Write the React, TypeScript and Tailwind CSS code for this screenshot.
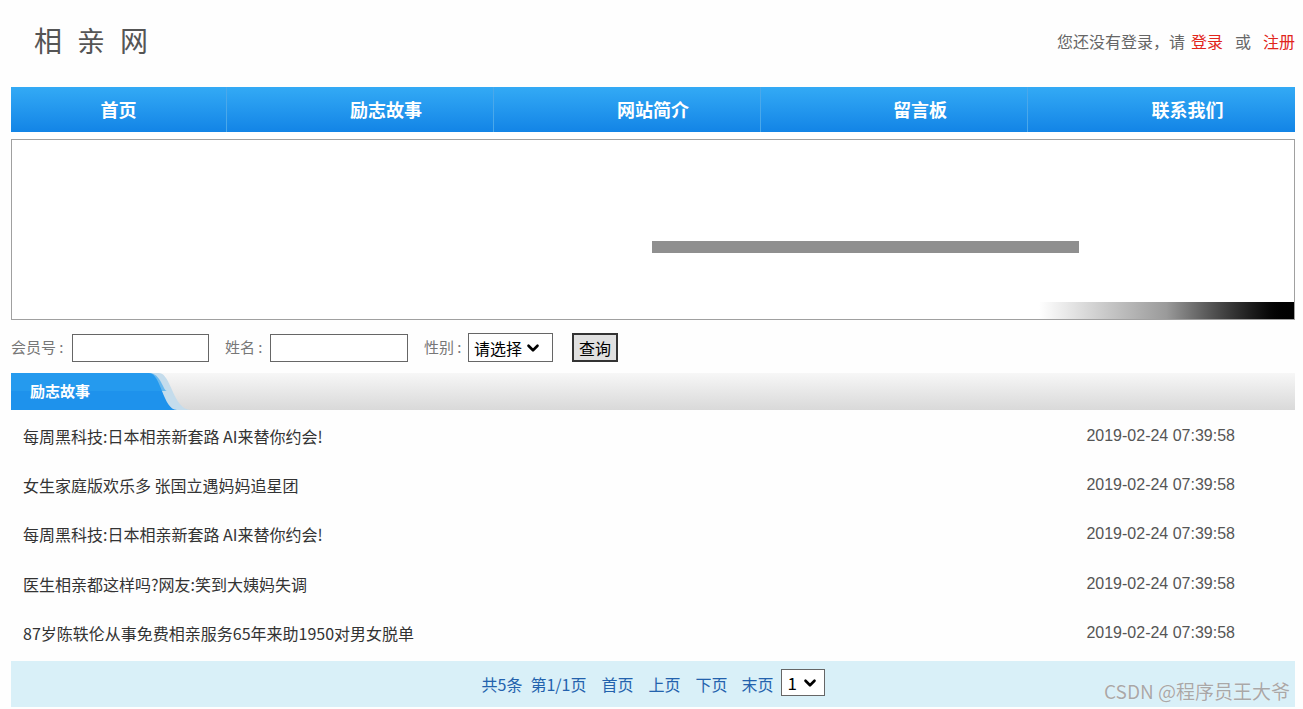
import { ChevronDown } from "lucide-react";

const nav = ["首页", "励志故事", "网站简介", "留言板", "联系我们"];

const stories = [
  "每周黑科技:日本相亲新套路 AI来替你约会!",
  "女生家庭版欢乐多 张国立遇妈妈追星团",
  "每周黑科技:日本相亲新套路 AI来替你约会!",
  "医生相亲都这样吗?网友:笑到大姨妈失调",
  "87岁陈轶伦从事免费相亲服务65年来助1950对男女脱单",
];

const font = "font-['Microsoft_YaHei','Noto_Sans_CJK_SC',sans-serif]";

export default function App() {
  return (
    <div className={`relative w-[1303px] h-[709px] bg-[#fefefe] overflow-hidden ${font}`}>
      {/* Header */}
      <div className="flex items-center justify-between w-[1295px] h-[87px] pl-[34px] pb-[8px]">
        <h1 className="text-[28px] text-[#555] tracking-[15px] font-normal">相亲网</h1>
        <div className="text-[16px] text-[#666] flex items-center pt-[2px]">
          <span>您还没有登录，请</span>
          <span className="text-[#e1251b] ml-[6px]">登录</span>
          <span className="ml-[12px]">或</span>
          <span className="text-[#e1251b] ml-[12px]">注册</span>
        </div>
      </div>

      {/* Nav */}
      <div className="ml-[11px] w-[1284px] h-[45px] flex bg-gradient-to-b from-[#33aaf5] to-[#1284e6] text-white font-bold text-[18px]">
        {nav.map((item, i) => (
          <div
            key={item}
            className={
              i === 0
                ? "w-[215px] flex items-center justify-center"
                : `${i === 4 ? "flex-1" : "w-[267px]"} border-l border-[#4aa8ea] pl-[52px] flex items-center justify-center`
            }
          >
            {item}
          </div>
        ))}
      </div>

      {/* Banner */}
      <div className="ml-[11px] w-[1284px] mt-[7px] h-[181px] border border-[#a0a0a0] bg-white flex flex-col">
        <div className="flex-1 flex items-start pt-[101px] pl-[640px]">
          <div className="w-[427px] h-[12px] bg-[#8f8f8f]" />
        </div>
        <div className="flex justify-end">
          <div className="w-[255px] h-[17px] bg-gradient-to-r from-white via-[#9a9a9a] to-black" />
        </div>
      </div>

      {/* Search */}
      <div className="flex items-center ml-[11px] mt-[13px] h-[29px] text-[15px] text-[#777]">
        <span className="w-[61px]">会员号 :</span>
        <div className="w-[137px] h-[28px] border border-[#666] bg-white" />
        <span className="ml-[16px] w-[45px]">姓名 :</span>
        <div className="w-[138px] h-[28px] border border-[#666] bg-white" />
        <span className="ml-[16px] w-[44px]">性别 :</span>
        <div className="w-[85px] h-[29px] border border-[#666] bg-white flex items-center pl-[5px] text-[16px] text-black gap-[2px]">
          <span>请选择</span>
          <ChevronDown className="w-[18px] h-[18px]" strokeWidth={3.5} />
        </div>
        <div className="ml-[19px] w-[46px] h-[29px] border-2 border-[#333] bg-[#e0e0e0] flex items-center justify-center text-[16px] text-black">
          查询
        </div>
      </div>

      {/* Section header */}
      <div className="relative ml-[11px] w-[1284px] mt-[11px] h-[37px] bg-gradient-to-b from-[#f7f7f7] to-[#d9d9d9] flex items-center">
        <svg className="absolute left-0 top-0" width="180" height="37" viewBox="0 0 180 37">
          <path d="M0 0 H148 C160 0 162 37 180 37 H0 Z" fill="#c4dcec" />
          <path d="M0 0 H138 C150 0 152 37 166 37 H0 Z" fill="#1e92ec" />
          <path d="M0 0 H138 C150 0 152 18 156 18 H0 Z" fill="#2aa0f0" opacity="0.6" />
        </svg>
        <span className="relative ml-[19px] text-white font-bold text-[15px]">励志故事</span>
      </div>

      {/* Story list */}
      <div className="ml-[11px] w-[1284px] mt-[1px] flex flex-col">
        {stories.map((s, i) => (
          <div key={i} className="h-[49.4px] flex items-center justify-between pl-[12px] pr-[60px] text-[16px]">
            <span className="text-[#333]">{s}</span>
            <span className="text-[#555] font-['Liberation_Sans',sans-serif]">2019-02-24 07:39:58</span>
          </div>
        ))}
      </div>

      {/* Pagination */}
      <div className="ml-[11px] w-[1284px] mt-[3px] h-[46px] bg-[#d9f0f8] flex items-center justify-center text-[16px] text-[#2362ad]">
        <span>共5条</span>
        <span className="ml-[8px]">第1/1页</span>
        <span className="ml-[15px]">首页</span>
        <span className="ml-[15px]">上页</span>
        <span className="ml-[15px]">下页</span>
        <span className="ml-[14px]">末页</span>
        <div className="ml-[7px] w-[44px] h-[27px] border border-[#666] bg-white flex items-center pl-[6px] gap-[4px] text-[17px] text-black mb-[2px]">
          <span>1</span>
          <ChevronDown className="w-[18px] h-[18px]" strokeWidth={3.5} />
        </div>
      </div>

      {/* Watermark */}
      <div className="absolute right-[13px] top-[677px] text-[19px] text-[#a8a8a8] [text-shadow:0_0_1px_#fff]">
        CSDN @程序员王大爷
      </div>
    </div>
  );
}
